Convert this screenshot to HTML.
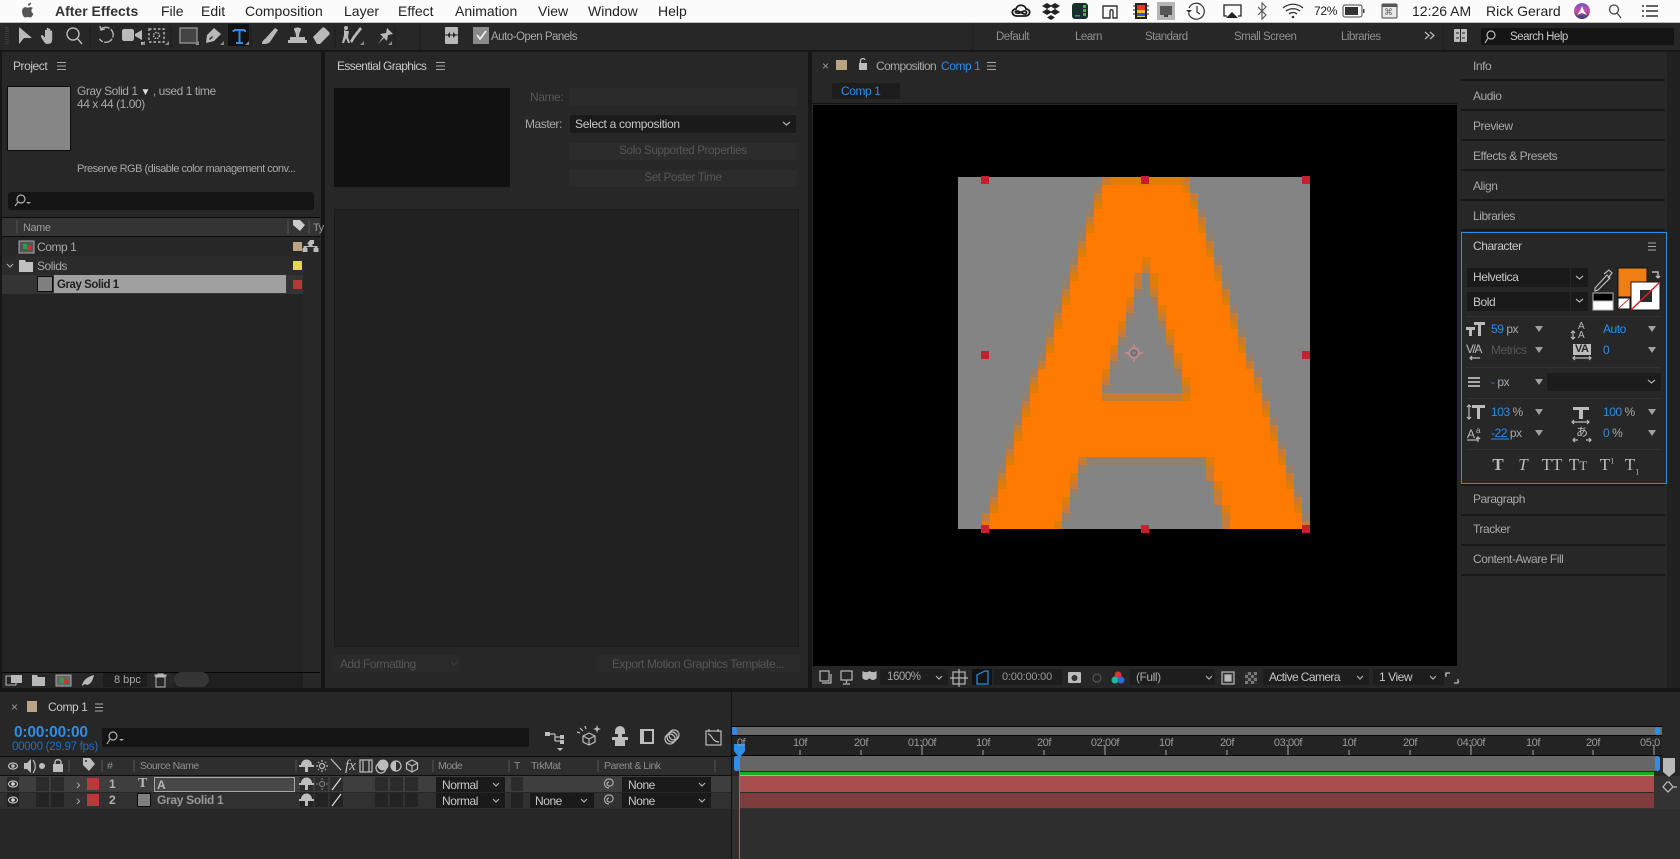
<!DOCTYPE html>
<html><head><meta charset="utf-8"><title>After Effects</title>
<style>
html,body{margin:0;padding:0;background:#161616;width:1680px;height:859px;overflow:hidden}
#r{position:relative;width:1680px;height:859px;overflow:hidden;font-family:"Liberation Sans",sans-serif}
#r div{position:absolute}
.t{position:absolute;white-space:nowrap;font:12px/14px "Liberation Sans",sans-serif;letter-spacing:-.45px;color:#a8a8a8}
.m{position:absolute;white-space:nowrap;font:14px/18px "Liberation Sans",sans-serif;color:#222;top:2px}
.b{color:#2e8de6}
.d{color:#565656}
.w{color:#c8c8c8}
.c{transform:translateX(-50%)}
.h{font-size:10.5px;color:#8f8f8f;letter-spacing:-.5px;top:759px}
.g{font-size:11.5px;letter-spacing:-.5px;top:30px}
.k{font-size:11px;color:#9a9a9a;top:736px;letter-spacing:-.4px}
.s{font-family:"Liberation Serif",serif;font-size:17px;line-height:18px;color:#bcbcbc;letter-spacing:0;top:456px;transform:translateX(-50%)}
svg{position:absolute;left:0;top:0}
</style></head><body><div id="r">

<!-- menu bar -->
<div style="left:0;top:0;width:1680px;height:22px;background:#fbfbfb"></div>
<div style="left:0;top:22px;width:1680px;height:1px;background:#bdbdbd"></div>
<div style="left:0;top:23px;width:1680px;height:27px;background:#272727"></div>
<div style="left:228px;top:24px;width:21px;height:22px;background:#111"></div>
<div style="left:1481px;top:28px;width:193px;height:17px;background:#141414;border-radius:2px"></div>

<!-- panels -->
<div style="left:2px;top:52px;width:319px;height:636px;background:#272727"></div>
<div style="left:325px;top:52px;width:483px;height:636px;background:#272727"></div>
<div style="left:812px;top:52px;width:649px;height:636px;background:#272727"></div>
<div style="left:1461px;top:52px;width:206px;height:636px;background:#272727"></div>
<div style="left:1667px;top:52px;width:13px;height:636px;background:#202020"></div>
<div style="left:0;top:692px;width:1680px;height:167px;background:#272727"></div>

<!-- project -->
<div style="left:7px;top:86px;width:64px;height:65px;background:#868686;border:1px solid #0b0b0b;box-sizing:border-box"></div>
<div style="left:8px;top:192px;width:306px;height:18px;background:#141414;border-radius:3px"></div>
<div style="left:2px;top:217px;width:318px;height:1px;background:#0a0a0a"></div>
<div style="left:2px;top:218px;width:318px;height:19px;background:#343434"></div>
<div style="left:2px;top:236px;width:318px;height:1px;background:#0a0a0a"></div>
<div style="left:2px;top:237px;width:301px;height:19px;background:#272727"></div>
<div style="left:2px;top:256px;width:301px;height:19px;background:#2b2b2b"></div>
<div style="left:2px;top:275px;width:301px;height:19px;background:#343434"></div>
<div style="left:54px;top:275px;width:232px;height:18px;background:#a0a0a0"></div>
<div style="left:37px;top:276px;width:16px;height:16px;background:#7f7f7f;border:1px solid #0c0c0c;box-sizing:border-box"></div>
<div style="left:293px;top:242px;width:9px;height:9px;background:#b9a583"></div>
<div style="left:293px;top:261px;width:9px;height:9px;background:#e6d844"></div>
<div style="left:293px;top:280px;width:9px;height:9px;background:#b83636"></div>
<div style="left:2px;top:294px;width:301px;height:378px;background:#242424"></div>
<div style="left:2px;top:672px;width:318px;height:1px;background:#050505"></div>
<div style="left:174px;top:673px;width:129px;height:15px;background:#1f1f1f"></div>
<div style="left:103px;top:673px;width:44px;height:14px;background:#1d1d1d;border-radius:2px"></div>
<div style="left:174px;top:672px;width:35px;height:15px;background:#353535;border-radius:8px"></div>

<!-- essential graphics -->
<div style="left:334px;top:88px;width:176px;height:99px;background:#111"></div>
<div style="left:569px;top:88px;width:228px;height:18px;background:#2b2b2b"></div>
<div style="left:570px;top:115px;width:226px;height:18px;background:#1a1a1a;border-radius:2px"></div>
<div style="left:569px;top:143px;width:228px;height:17px;background:#2c2c2c"></div>
<div style="left:569px;top:170px;width:228px;height:17px;background:#2c2c2c"></div>
<div style="left:334px;top:209px;width:465px;height:438px;background:#212121;border:1px solid #1a1a1a;box-sizing:border-box"></div>
<div style="left:333px;top:655px;width:127px;height:17px;background:#2a2a2a"></div>
<div style="left:597px;top:655px;width:203px;height:17px;background:#2a2a2a"></div>

<!-- comp panel -->
<div style="left:832px;top:83px;width:68px;height:16px;background:#1d1d1d;border-radius:2px"></div>
<div style="left:812px;top:103px;width:645px;height:1px;background:#111"></div>
<div style="left:813px;top:105px;width:644px;height:561px;background:#000"></div>
<div style="left:812px;top:666px;width:649px;height:22px;background:#262626"></div>
<div style="left:880px;top:669px;width:68px;height:16px;background:#1d1d1d;border-radius:2px"></div>
<div style="left:972px;top:669px;width:20px;height:16px;background:#121212"></div>
<div style="left:994px;top:669px;width:68px;height:16px;background:#1d1d1d;border-radius:2px"></div>
<div style="left:1130px;top:669px;width:85px;height:16px;background:#1d1d1d;border-radius:2px"></div>
<div style="left:1263px;top:669px;width:106px;height:16px;background:#1d1d1d;border-radius:2px"></div>
<div style="left:1373px;top:669px;width:71px;height:16px;background:#1d1d1d;border-radius:2px"></div>

<!-- A pixel art -->
<svg style="left:958px;top:177px" width="352" height="352" viewBox="0 0 44 44" shape-rendering="crispEdges" fill="none">
<rect width="44" height="44" fill="#848484"/>
<path stroke="#ff7a00" stroke-width="1" d="M18 1.5H28M18 2.5H29M18 3.5H29M17 4.5H30M17 5.5H30M17 6.5H30M16 7.5H31M16 8.5H31M16 9.5H31M15 10.5H32M15 11.5H32M15 12.5H32M14 13.5H33M14 14.5H33M14 15.5H33M13 16.5H34M13 17.5H34M13 18.5H34M12 19.5H35M12 20.5H35M12 21.5H35M11 22.5H36M11 23.5H36M10 24.5H37M10 25.5H37M10 26.5H37M9 27.5H38M9 28.5H38M9 29.5H38M8 30.5H39M8 31.5H39M8 32.5H39M7 33.5H40M7 34.5H40M7 35.5H40M6 36.5H41M6 37.5H41M6 38.5H41M5 39.5H42M5 40.5H42M5 41.5H42M4 42.5H43M4 43.5H43"/>
<path stroke="#848484" stroke-width="1" d="M23 12.5H24M23 13.5H24M23 14.5H24M22 15.5H24M22 16.5H25M22 17.5H25M21 18.5H25M21 19.5H26M21 20.5H26M20 21.5H26M20 22.5H27M20 23.5H27M19 24.5H27M19 25.5H28M19 26.5H28M16 36.5H31M15 37.5H31M15 38.5H32M15 39.5H32M14 40.5H32M14 41.5H33M14 42.5H33M13 43.5H33"/>
<path stroke="#e07c08" stroke-width="1" d="M19 0.5H28M28 1.5h1M17 3.5h1M16 6.5h1M15 9.5h1M14 12.5h1M13 15.5h1M12 18.5h1M11 21.5h1M9 26.5h1M8 29.5h1M7 32.5h1M6 35.5h1M5 38.5h1M4 41.5h1M3 43.5h1M29 3.5h1M30 6.5h1M31 9.5h1M32 12.5h1M33 15.5h1M34 18.5h1M35 21.5h1M37 26.5h1M38 29.5h1M39 32.5h1M40 35.5h1M41 38.5h1M42 41.5h1M23 10.5h1M24 12.5h1M24 13.5h1M21 15.5h1M25 16.5h1M20 18.5h1M26 19.5h1M19 21.5h1M27 22.5h1M18 24.5h1M28 25.5h1M28 27.5h1M31 35.5h1M14 37.5h1M32 38.5h1M13 40.5h1M33 41.5h1M12 43.5h1"/>
<path stroke="#c67c34" stroke-width="1" d="M18 0.5h1M28 0.5h1M17 2.5h1M16 5.5h1M15 8.5h1M14 11.5h1M13 14.5h1M12 17.5h1M11 20.5h1M10 23.5h1M9 25.5h1M8 28.5h1M7 31.5h1M6 34.5h1M5 37.5h1M4 40.5h1M3 42.5h1M29 2.5h1M30 5.5h1M31 8.5h1M32 11.5h1M33 14.5h1M34 17.5h1M35 20.5h1M36 23.5h1M37 25.5h1M38 28.5h1M39 31.5h1M40 34.5h1M41 37.5h1M42 40.5h1M43 43.5h1M23 11.5h1M22 12.5h1M22 13.5h1M24 14.5h1M21 16.5h1M25 17.5h1M20 19.5h1M26 20.5h1M19 22.5h1M27 23.5h1M18 25.5h1M28 26.5h1M18 27.5H28M15 35.5h1M31 36.5h1M31 37.5h1M14 38.5h1M32 39.5h1M32 40.5h1M13 41.5h1M33 42.5h1M33 43.5h1"/>
<path stroke="#95806c" stroke-width="1" d="M17 1.5h1M16 4.5h1M15 7.5h1M14 10.5h1M13 13.5h1M12 16.5h1M11 19.5h1M10 22.5h1M9 24.5h1M8 27.5h1M7 30.5h1M6 33.5h1M5 36.5h1M4 39.5h1M30 4.5h1M31 7.5h1M32 10.5h1M33 13.5h1M34 16.5h1M35 19.5h1M36 22.5h1M37 24.5h1M38 27.5h1M39 30.5h1M40 33.5h1M41 36.5h1M42 39.5h1M43 42.5h1M22 14.5h1M24 15.5h1M21 17.5h1M25 18.5h1M20 20.5h1M26 21.5h1M19 23.5h1M27 24.5h1M18 26.5h1M16 35.5H31M15 36.5h1M14 39.5h1M13 42.5h1"/>
</svg>

<!-- character dropdowns -->
<div style="left:1467px;top:268px;width:103px;height:19px;background:#1a1a1a"></div>
<div style="left:1571px;top:268px;width:17px;height:19px;background:#1a1a1a"></div>
<div style="left:1467px;top:292px;width:103px;height:19px;background:#1a1a1a"></div>
<div style="left:1571px;top:292px;width:17px;height:19px;background:#1a1a1a"></div>
<div style="left:1547px;top:373px;width:114px;height:18px;background:#1c1c1c;border-radius:2px"></div>
<div style="left:1466px;top:316px;width:195px;height:1px;background:#333"></div>
<div style="left:1466px;top:367px;width:195px;height:1px;background:#333"></div>
<div style="left:1466px;top:398px;width:195px;height:1px;background:#333"></div>
<div style="left:1466px;top:449px;width:195px;height:1px;background:#333"></div>
<div style="left:1461px;top:232px;width:206px;height:252px;border:1px solid #2e8de6;box-sizing:border-box"></div>
<div style="left:1461px;top:79px;width:204px;height:2px;background:#181818"></div>
<div style="left:1461px;top:109px;width:204px;height:2px;background:#181818"></div>
<div style="left:1461px;top:139px;width:204px;height:2px;background:#181818"></div>
<div style="left:1461px;top:169px;width:204px;height:2px;background:#181818"></div>
<div style="left:1461px;top:199px;width:204px;height:2px;background:#181818"></div>
<div style="left:1461px;top:229px;width:204px;height:2px;background:#181818"></div>
<div style="left:1461px;top:484px;width:204px;height:2px;background:#181818"></div>
<div style="left:1461px;top:514px;width:204px;height:2px;background:#181818"></div>
<div style="left:1461px;top:544px;width:204px;height:2px;background:#181818"></div>
<div style="left:1461px;top:574px;width:204px;height:2px;background:#181818"></div>

<!-- timeline layout -->
<div style="left:102px;top:728px;width:427px;height:19px;background:#141414;border-radius:2px"></div>
<div style="left:0;top:756px;width:732px;height:1px;background:#0a0a0a"></div>
<div style="left:0;top:757px;width:732px;height:18px;background:#2e2e2e"></div>
<div style="left:0;top:775px;width:732px;height:1px;background:#0e0e0e"></div>
<div style="left:0;top:776px;width:732px;height:16px;background:#3e3e3e"></div>
<div style="left:0;top:793px;width:732px;height:16px;background:#313131"></div>
<div style="left:732px;top:809px;width:948px;height:50px;background:#2e2e2e"></div>
<div style="left:732px;top:726px;width:930px;height:1px;background:#050505"></div>
<div style="left:732px;top:727px;width:930px;height:8px;background:#6a6a6a"></div>
<div style="left:732px;top:735px;width:930px;height:1px;background:#050505"></div>
<div style="left:732px;top:736px;width:930px;height:19px;background:#232323"></div>
<div style="left:732px;top:755px;width:930px;height:1px;background:#050505"></div>
<div style="left:735px;top:756px;width:923px;height:15px;background:#666"></div>
<div style="left:732px;top:776px;width:948px;height:33px;background:#333"></div>
<div style="left:732px;top:727px;width:5px;height:8px;background:#2e8de6;border-radius:3px"></div>
<div style="left:1655px;top:727px;width:5px;height:8px;background:#2e8de6;border-radius:3px"></div>
<div style="left:734px;top:756px;width:5px;height:15px;background:#2e8de6;border-radius:3px"></div>
<div style="left:1655px;top:756px;width:5px;height:15px;background:#2e8de6;border-radius:3px"></div>
<div style="left:740px;top:772px;width:914px;height:3px;background:#12b020"></div>
<div style="left:740px;top:775px;width:914px;height:1px;background:#cfa0a0"></div>
<div style="left:740px;top:776px;width:914px;height:16px;background:#a94e4d"></div>
<div style="left:740px;top:792px;width:914px;height:1px;background:#2a2a2a"></div>
<div style="left:740px;top:793px;width:914px;height:15px;background:#7e3d3c"></div>
<div style="left:731px;top:692px;width:1px;height:167px;background:#111"></div>
<div style="left:739px;top:747px;width:1px;height:112px;background:#2e8de6"></div>
<div style="left:27px;top:701px;width:10px;height:11px;background:#b9a583"></div>
<div style="left:836px;top:60px;width:11px;height:10px;background:#b9a583"></div>
<div style="left:7px;top:777px;width:12px;height:14px;background:#2a2a2a"></div>
<div style="left:7px;top:793px;width:12px;height:14px;background:#222"></div>
<div style="left:36px;top:777px;width:13px;height:14px;background:#2c2c2c"></div><div style="left:51px;top:777px;width:13px;height:14px;background:#2c2c2c"></div>
<div style="left:36px;top:793px;width:13px;height:14px;background:#232323"></div><div style="left:51px;top:793px;width:13px;height:14px;background:#232323"></div>
<div style="left:87px;top:778px;width:12px;height:12px;background:#b83a3a"></div>
<div style="left:87px;top:794px;width:12px;height:12px;background:#b83a3a"></div>
<div style="left:137px;top:793px;width:14px;height:14px;background:#7f7f7f;border:1px solid #0c0c0c;box-sizing:border-box"></div>
<div style="left:154px;top:777px;width:141px;height:15px;background:#484848;border:1px solid #a8a8a8;box-sizing:border-box"></div>
<div style="left:300px;top:777px;width:13px;height:14px;background:#2c2c2c"></div><div style="left:315px;top:777px;width:13px;height:14px;background:#2c2c2c"></div><div style="left:330px;top:777px;width:13px;height:14px;background:#2c2c2c"></div>
<div style="left:300px;top:793px;width:13px;height:14px;background:#232323"></div><div style="left:315px;top:793px;width:13px;height:14px;background:#232323"></div><div style="left:330px;top:793px;width:13px;height:14px;background:#232323"></div>
<div style="left:375px;top:777px;width:13px;height:14px;background:#2c2c2c"></div><div style="left:390px;top:777px;width:13px;height:14px;background:#2c2c2c"></div><div style="left:405px;top:777px;width:13px;height:14px;background:#2c2c2c"></div>
<div style="left:375px;top:793px;width:13px;height:14px;background:#232323"></div><div style="left:390px;top:793px;width:13px;height:14px;background:#232323"></div><div style="left:405px;top:793px;width:13px;height:14px;background:#232323"></div>
<div style="left:436px;top:777px;width:69px;height:15px;background:#1a1a1a"></div>
<div style="left:436px;top:793px;width:69px;height:15px;background:#1a1a1a"></div>
<div style="left:511px;top:777px;width:12px;height:14px;background:#2c2c2c"></div>
<div style="left:511px;top:793px;width:12px;height:15px;background:#232323"></div>
<div style="left:530px;top:793px;width:64px;height:15px;background:#1a1a1a"></div>
<div style="left:622px;top:777px;width:89px;height:15px;background:#1a1a1a"></div>
<div style="left:622px;top:793px;width:89px;height:15px;background:#1a1a1a"></div>

<!-- overlay icons -->
<svg width="1680" height="859" viewBox="0 0 1680 859">
<g fill="#c81f30" stroke="#3a1a1a" stroke-width="0">
<rect x="981" y="176" width="8" height="8"/><rect x="1141" y="176" width="8" height="8"/><rect x="1302" y="176" width="8" height="8"/>
<rect x="981" y="351" width="8" height="8"/><rect x="1302" y="351" width="8" height="8"/>
<rect x="981" y="525" width="8" height="8"/><rect x="1141" y="525" width="8" height="8"/><rect x="1302" y="525" width="8" height="8"/>
</g>
<g fill="none" stroke="#d88a90" stroke-width="1.200"><circle cx="1134" cy="353" r="5"/><path d="M1134 344v4M1134 358v4M1125 353h4M1139 353h4"/></g>
<circle cx="1134" cy="353" r="2.500" fill="none" stroke="#666"/>

<!-- menu bar icons -->
<path fill="#555" d="M28 4.600c.7-1.200 1.900-2 3-2.100.2 1.500-1 3.300-3 3.200zM33 8c-1 .7-1.600 1.500-1.600 2.700 0 1.400.8 2.400 2 2.900-.6 1.700-1.800 3.900-3.200 3.900-.8 0-1.400-.5-2.400-.5s-1.700.5-2.400.5c-1.700 0-3.400-3.300-3.400-6 0-2.900 1.900-4.400 3.500-4.400 1 0 1.800.6 2.400.6.5 0 1.500-.6 2.600-.6 1 0 1.800.4 2.500 1z"/>
<g fill="none" stroke="#1a1a1a" stroke-width="1.800"><path d="M1017 16c-6 0-6-7-1-7 1-5 9-5 10 0 5 0 5 7-1 7z"/><path d="M1017 13c-2 0-2-2 0-2 3 0 5 3 8 3 2 0 2-3 0-3-3 0-5 3-8 2"/></g>
<path fill="#222" d="M1047 3l5 3-5 3-5-3zM1055 3l5 3-5 3-5-3zM1047 9l5 3-5 3-5-3zM1055 9l5 3-5 3-5-3zM1051 15l4 2.500-4 2.500-4-2.500z"/>
<rect x="1072" y="3" width="16" height="16" rx="3" fill="#17302c"/><rect x="1083" y="5" width="3" height="3" fill="#3ab54a"/><rect x="1083" y="9" width="3" height="3" fill="#3ab54a"/><rect x="1083" y="13" width="3" height="3" fill="#3ab54a"/><rect x="1075" y="15" width="5" height="1.500" fill="#3a7ae0"/>
<path fill="none" stroke="#333" stroke-width="1.400" d="M1103 18V6h14v12h-4v-6c0-3-3-3-3 0v6z"/>
<rect x="1135" y="3" width="12" height="16" fill="#222"/><rect x="1137" y="5" width="8" height="5" fill="#e33"/><rect x="1137" y="10" width="8" height="3" fill="#f8b620"/><rect x="1137" y="13" width="8" height="3" fill="#3a4be0"/><rect x="1137" y="16" width="8" height="1" fill="#dd4"/><path stroke="#222" d="M1133 6h2M1133 10h2M1133 14h2M1147 6h2M1147 10h2M1147 14h2"/>
<rect x="1157" y="2" width="18" height="18" fill="#b5b5b5"/><rect x="1160" y="6" width="12" height="9" fill="#555"/><rect x="1164" y="15" width="4" height="2" fill="#444"/>
<g fill="none" stroke="#333" stroke-width="1.200"><path d="M1189 8a8 8 0 1 1-.5 5"/><path d="M1197 6v6l3 2"/></g><path fill="#333" d="M1186 10h6l-3 3z"/>
<path fill="none" stroke="#222" stroke-width="1.300" d="M1227 16h-3V5h17v11h-3"/><path fill="#222" d="M1226 18h12l-6-6z"/>
<path fill="none" stroke="#555" stroke-width="1.100" d="M1258 7l8 8-4 4V3l4 4-8 8"/>
<path fill="none" stroke="#333" stroke-width="1.300" d="M1283 8c6-5 14-5 20 0M1286 11c4-3 10-3 14 0M1289 14c2-2 6-2 8 0"/><circle cx="1293" cy="17" r="1.300" fill="#333"/>
<rect x="1343" y="5" width="19" height="12" rx="2" fill="none" stroke="#444"/><rect x="1345" y="7" width="13" height="8" fill="#333"/><rect x="1363" y="9" width="1.500" height="4" fill="#444"/>
<rect x="1382" y="4" width="15" height="14" rx="1" fill="#e8e8e8" stroke="#444"/><rect x="1382" y="4" width="15" height="3" fill="#555"/>
<defs><linearGradient id="si" x1="0" y1="0" x2="0" y2="1"><stop offset="0" stop-color="#6a5acd"/><stop offset=".5" stop-color="#d14c9c"/><stop offset="1" stop-color="#2a3a7a"/></linearGradient></defs>
<circle cx="1582" cy="11" r="8" fill="url(#si)"/><path fill="#fff" d="M1582 6l2 5 3 4-5-2-5 2 3-4z"/>
<g fill="none" stroke="#444" stroke-width="1.300"><circle cx="1614" cy="9.500" r="4.500"/><path d="M1617 13l4 5"/></g>
<path stroke="#333" stroke-width="1.500" d="M1642 6h2m2 0h12M1642 11h2m2 0h12M1642 16h2m2 0h12"/>

<!-- toolbar -->
<path stroke="#3a3a3a" stroke-dasharray="1 1" stroke-width="4" d="M7 27v18"/>
<g fill="#b9b9b9">
<path d="M19 27v17l5-6h8z"/>
<path d="M46 44c-2-2-5-6-5-8 0-1 1-1.500 2-.5l2 2v-7c0-1 1.800-1 1.800 0v4-6c0-1 1.800-1 1.800 0v6-5c0-1 1.800-1 1.800 0v5-3c0-1 1.800-1 1.800 0v7c0 3-1 5-2 5z"/>
<path d="M122 31c0-1 1-2 2-2h8c1 0 2 1 2 2v8c0 1-1 2-2 2h-8c-1 0-2-1-2-2zM135 34l7-4v10l-7-4z"/>
<rect x="180" y="28" width="17" height="15" fill="#444" stroke="#8a8a8a" stroke-width="1.500"/>
<path d="M206 43l1-8 7-7 7 6-7 7zM210 40l3-3-1-1-3 3z"/>
<path d="M262 44c0-2 1-4 3-5l10-11 3 2-8 12c-2 2-5 2-8 2z"/>
<path d="M288 40h19v3h-19zM290 37h15v3h-15zM294 29c0-2 7-2 7 0 0 2-2 3-2 8h-3c0-5-2-6-2-8z"/>
<path d="M313 37l9-9c1-1 2-1 3 0l4 4c1 1 1 2 0 3l-9 9h-3z"/>
<path d="M378 44l5-7-3-3 6-1 1-5 6 6-5 1-1 6-3-3z"/>
<path d="M344 30l3 1 2 0-1 6 2 6h-2l-2-5-2 5h-2l2-8zM360 27l2 2-7 9-3 5-2-2 3-5z"/>
<circle cx="346" cy="28" r="2"/>
<path d="M141 42h3v3h-3zM172 0"/>
<path d="M145 45h-4l4-4zM169 45h-4l4-4zM199 45h-4l4-4zM224 45h-4l4-4zM249 45h-4l4-4zM364 45h-4l4-4zM392 45h-4l4-4z" fill="#8a8a8a"/>
<path d="M473 27h16v17h-16z" fill="#8a8a8a"/>
<rect x="445" y="27" width="13" height="17" rx="1"/>
</g>
<path d="M445 35h13" stroke="#272727" stroke-width="1"/><path fill="#272727" d="M450 32v6l-3-3zM453 32v6l3-3z"/><path d="M477 35l3 4 6-8" stroke="#eee" stroke-width="1.800" fill="none"/>
<g fill="none" stroke="#b9b9b9" stroke-width="1.400">
<circle cx="73" cy="34" r="6"/><path d="M77 38l5 6"/>
<path d="M101 29a7.500 7.500 0 1 1-1.500 10" stroke-dasharray="9 1.500"/><path d="M100 26l1 4 4-1"/>
<rect x="149" y="29" width="15" height="13" stroke-dasharray="2.500 2"/><circle cx="156.500" cy="35.500" r="3" stroke-dasharray="1.500 1"/>
</g>
<path d="M234 30h11M239.500 30v13M236 43h7M233.500 30v2M245 30v2" stroke="#2e8de6" stroke-width="2" fill="none"/>
<rect x="1454" y="29" width="13" height="13" rx="1" fill="#bbb"/><path d="M1460.500 29v13M1456 33h3M1456 38h3M1462 33h3M1462 38h3" stroke="#222"/>
<g fill="none" stroke="#bbb" stroke-width="1.200"><circle cx="1491" cy="35" r="4"/><path d="M1488 38l-3 5"/><path d="M1425 32l4 3.500-4 3.500M1430 32l4 3.500-4 3.500"/></g>
<path stroke="#1b1b1b" d="M973 23v27M1443 23v27M420 23v27M171 26v22M90 26v22M251 26v22M335 26v22M395 26v22"/>

<!-- hamburgers -->
<g stroke="#a8a8a8" stroke-width="1">
<path d="M57 62.500h9M57 66h9M57 69.500h9"/>
<path d="M436 62.500h9M436 66h9M436 69.500h9"/>
<path d="M987 62.500h9M987 66h9M987 69.500h9"/>
<path d="M1648 243h8M1648 246.500h8M1648 250h8"/>
<path d="M95 704h8M95 707.500h8M95 711h8"/>
</g>
<!-- project search, icons -->
<g fill="none" stroke="#b0b0b0" stroke-width="1.200"><circle cx="21" cy="199" r="4"/><path d="M18 202l-3 4"/></g><path fill="#b0b0b0" d="M26 202h5l-2.500 2z"/>
<g stroke="#555"><path d="M17 220v14M288 220v14M309 220v14"/></g>
<path fill="#ccc" d="M293 220h7l5 5-5 6-7-6z"/>
<rect x="19" y="241" width="15" height="12" fill="#555" stroke="#aaa"/><rect x="23" y="244" width="4" height="5" fill="#2e9e4a"/><rect x="27" y="245" width="4" height="5" fill="#c33"/>
<path fill="#bbb" d="M310 240h4v4h-1.500v2h5v2h1v4h-5v-4h1v-1h-8v1h1v4h-5v-4h1v-2h5v-2h-1.500z"/>
<path fill="#c0c0c0" d="M19 260h6l1 2h7v10H19z"/>
<path fill="none" stroke="#aaa" stroke-width="1.200" d="M7 264l3 3 3-3"/>
<g fill="#b8b8b8">
<rect x="6" y="676" width="10" height="9" fill="none" stroke="#b8b8b8"/><rect x="11" y="675" width="11" height="8"/>
<path d="M32 675h5l1 2h7v9H32z"/>
<rect x="56" y="675" width="15" height="11" fill="#666" stroke="#aaa"/>
<path d="M82 686c0-4 4-9 12-11-1 5-3 9-7 10l-2-1z"/>
<path d="M156 677h9v10h-9zM155 675h11v1h-11zM158 674h5v1h-5z" fill="none" stroke="#b8b8b8"/>
</g>
<rect x="60" y="678" width="4" height="5" fill="#2e9e4a"/><rect x="64" y="679" width="4" height="5" fill="#c33"/>
<!-- dropdown chevrons -->
<g fill="none" stroke="#b0b0b0" stroke-width="1.200">
<path d="M783 122l3.500 3 3.500-3M1576 276l3.500 3 3.500-3M1576 299l3.500 3 3.500-3M1648 380l3.500 3 3.500-3"/>
<path d="M493 783l3 3 3-3M493 799l3 3 3-3M581 799l3 3 3-3M699 783l3 3 3-3M699 799l3 3 3-3"/>
<path d="M936 676l3 3 3-3M1206 676l3 3 3-3M1357 676l3 3 3-3M1430 676l3 3 3-3"/>
</g>
<path fill="none" stroke="#3d3d3d" d="M451 662l3 3 3-3"/>
<!-- viewer toolbar icons -->
<g fill="none" stroke="#b8b8b8" stroke-width="1.200">
<rect x="820" y="671" width="9" height="10"/><path d="M831 674v9h-9"/>
<rect x="841" y="671" width="11" height="9"/><path d="M846.500 680v3M843 684h7"/>
<path d="M863 672c2 1 4 1 6 0v6c-2 2-4 2-6 0zM870 672c2 1 4 1 6 0v6c-2 2-4 2-6 0z" fill="#b8b8b8"/>
<rect x="953" y="672" width="12" height="12"/><path d="M959 669v18M950 678h18"/>
<path stroke="#2e8de6" d="M977 682v-7l8-4h3v13h-11z"/>
<circle cx="1097" cy="678" r="4" stroke="#555"/>
<rect x="1222" y="672" width="12" height="12" fill="#333"/><rect x="1225" y="675" width="6" height="6" fill="#bbb"/>
<path d="M1450 673h-4v4M1454 683h4v-4M1447 673l-2 2M1457 683l2-2"/>
</g>
<rect x="1068" y="672" width="13" height="11" rx="1" fill="#bbb"/><circle cx="1074.500" cy="678" r="3" fill="#333"/>
<rect x="1245" y="672" width="12" height="12" fill="#777"/><path d="M1245 672h3v3h-3zM1251 672h3v3h-3zM1248 675h3v3h-3zM1254 675h3v3h-3zM1245 678h3v3h-3zM1251 678h3v3h-3zM1248 681h3v3h-3zM1254 681h3v3h-3z" fill="#333"/>
<circle cx="1118" cy="675" r="3.500" fill="#d33"/><circle cx="1115" cy="680" r="3.500" fill="#2b9"/><circle cx="1121" cy="680" r="3.500" fill="#36d"/>

<!-- character icons -->
<g fill="none" stroke="#bcbcbc" stroke-width="1.200">
<path d="M1595 288l12-13 3 3-12 12-3 1z"/><path d="M1604 274l5-4 3 3-4 5"/>
<path d="M1468 378h12M1468 382h12M1468 386h12" stroke-width="1.800"/>
<path d="M1469 405v14M1467 407l2-2 2 2M1467 417l2 2 2-2"/>
<path d="M1572 422h17M1574 424l-2-2 2-2M1587 424l2-2-2-2"/>
<path d="M1573 358h18M1575 360l-2-2 2-2M1589 360l2-2-2-2"/>
<path d="M1573 331v8M1571 333l2-2 2 2M1571 337l2 2 2-2"/>
<path d="M1470 358h10M1472 356l-2 2 2 2" />
<path d="M1478 442v-5M1476 439l2-2 2 2"/>
<path d="M1467 440h11"/>
<path d="M1573 440h5M1586 440h5M1575 438l-2 2 2 2M1589 438l2 2-2 2"/>
</g>
<path fill="#bcbcbc" d="M1466 327h9v3h-3v6h-3v-6h-3zM1474 322h11v3h-4v11h-3v-11h-4zM1472 405h13v3h-5v11h-3v-11h-5zM1573 407h16v3h-6v9h-4v-9h-6z"/>
<g fill="#a0a0a0">
<path d="M1535 326h8l-4 6zM1648 326h8l-4 6zM1535 347h8l-4 6zM1648 347h8l-4 6zM1535 379h8l-4 6zM1535 409h8l-4 6zM1648 409h8l-4 6zM1535 430h8l-4 6zM1648 430h8l-4 6z"/>
</g>
<path d="M1618 268h29v29h-29z" fill="#ef7f14" stroke="#111"/>
<rect x="1631" y="282" width="29" height="28" fill="#fff" stroke="#111"/>
<rect x="1640" y="290" width="12" height="12" fill="#2a2a2a"/>
<path d="M1631 310l29-28" stroke="#d81f26" stroke-width="1.500"/>
<path d="M1652 272h6v6M1658 278l-2-2m2 2l2-2" fill="none" stroke="#bbb" stroke-width="1.400"/>
<rect x="1593" y="293" width="20" height="8" fill="#000" stroke="#bbb"/><rect x="1593" y="301" width="20" height="9" fill="#fff" stroke="#bbb"/>
<rect x="1618" y="298" width="12" height="11" fill="#fff" stroke="#111"/><path d="M1619 308l10-9" stroke="#d33"/>
<path d="M1491 439h18" stroke="#2e8de6"/>
<rect x="1573" y="344" width="18" height="11" fill="#bcbcbc"/>

<!-- timeline panel icons -->
<g fill="none" stroke="#b0b0b0" stroke-width="1.200"><circle cx="113" cy="736" r="4"/><path d="M110 739l-3 5"/></g><path fill="#b0b0b0" d="M119 739h5l-2.500 2z"/>
<g fill="none" stroke="#bdbdbd" stroke-width="1.200">
<path d="M549 734h6M555 734v7M555 737h5M555 741h5"/>
<path d="M589 733l6 3v6l-6 3-6-3v-6zM583 736l6 3 6-3M589 739v6"/><path d="M583 731l-3-3M586 729l-1-3M580 733l-3-1"/>
<rect x="706" y="731" width="15" height="14"/><path d="M708 734c4 0 4 8 11 8"/><path d="M709 729v3M718 729v3"/>
<circle cx="670" cy="739" r="5"/><circle cx="672" cy="737" r="5"/><circle cx="674" cy="735" r="5"/>
<ellipse cx="13" cy="766" rx="4.500" ry="3"/><ellipse cx="13" cy="784" rx="4.500" ry="3"/><ellipse cx="13" cy="800" rx="4.500" ry="3"/>
<path d="M33 760c3 4 3 9 0 13" />
<path d="M331 759l10 11"/>
<rect x="360" y="760" width="12" height="12"/><path d="M363 760v12M369 760v12"/>
<circle cx="396" cy="766" r="5"/><path d="M412 760l5.500 3v6l-5.500 3-5.500-3v-6zM406.500 763l5.500 3 5.500-3M412 766v6"/>
<circle cx="381" cy="768" r="5"/>
<circle cx="322" cy="766" r="2.500"/><path d="M322 760v2M322 770v2M316 766h2M326 766h2M318 762l1 1M325 769l1 1M326 762l-1 1M319 769l-1 1"/>
<path stroke="#777" d="M322 778v2M322 788v2M316 784h2M326 784h2"/><circle cx="322" cy="784" r="2.500" stroke="#777"/>
<path stroke="#ddd" d="M332 790l9-12M332 806l9-12"/>
</g>
<circle cx="13" cy="766" r="1.800" fill="#bdbdbd"/><circle cx="13" cy="784" r="1.800" fill="#ddd"/><circle cx="13" cy="800" r="1.800" fill="#ddd"/>
<path fill="#bdbdbd" d="M24 763h3l4-4v14l-4-4h-3z"/>
<circle cx="42" cy="766" r="3" fill="#bdbdbd"/>
<circle cx="383" cy="765" r="5.500" fill="#bdbdbd"/>
<rect x="53" y="764" width="10" height="8" fill="#bdbdbd"/><path d="M55 764v-2c0-3 6-3 6 0v2" fill="none" stroke="#bdbdbd" stroke-width="1.400"/>
<path fill="#bdbdbd" d="M83 758h7l5 6-6 7-6-6z"/><circle cx="86" cy="761" r="1" fill="#272727"/>
<path fill="#bdbdbd" d="M396 761a5 5 0 0 0 0 10z"/>
<path fill="#bdbdbd" d="M612 737h16v3h-16zM615 731a5 5 0 0 1 10 0v3h-10zM618 734h4v3h-4zM615 740h10v6h-10zM301 765a5.500 5.500 0 0 1 11 0h2v2h-15v-2zM305 767h3v5h-3zM301 783a5.500 5.500 0 0 1 11 0h2v2h-15v-2zM305 785h3v5h-3zM301 799a5.500 5.500 0 0 1 11 0h2v2h-15v-2zM305 801h3v5h-3z"/>
<rect x="640" y="729" width="14" height="15" fill="#bdbdbd"/><rect x="644" y="731" width="8" height="11" fill="#272727"/>
<path fill="#bdbdbd" d="M545 732h5v4h-5zM560 735h4v4h-4zM560 740h4v4h-4z"/>
<path fill="#bdbdbd" d="M557 748h6l-3 3z"/>
<path fill="#bdbdbd" d="M597 725l1 3 3 1-3 1-1 3-1-3-3-1 3-1z" />
<g fill="none" stroke="#aaa" stroke-width="1.200"><path d="M609 788c-6 0-6-9 0-9 6 0 5 8 0 7-3-1-2-4 0-4"/><path d="M609 804c-6 0-6-9 0-9 6 0 5 8 0 7-3-1-2-4 0-4"/></g>
<path stroke="#555" d="M69 760v12M102 760v12M134 760v12M296 760v12M433 760v12M509 760v12M598 760v12M715 760v12"/>
<path fill="#2e8de6" d="M734 744h11v7l-5.500 7-5.500-7z"/>
<path fill="#b8b8b8" d="M1663 758h12v14l-6 5-6-5z"/>
<path fill="none" stroke="#b8b8b8" stroke-width="1.300" d="M1667 782l-4 5 5 5 5-5-4-5zM1673 787h4"/>
<path stroke="#aaa" d="M800 750v5M861 750v5M922 745v10M983 750v5M1044 750v5M1105 745v10M1166 750v5M1227 750v5M1288 745v10M1349 750v5M1410 750v5M1471 745v10M1533 750v5M1593 750v5M1654 745v10" fill="none"/>
<path fill="#bcbcbc" d="M859 63h8v7h-8z"/><path fill="none" stroke="#bcbcbc" stroke-width="1.300" d="M860.500 63v-2c0-3 4-3 4.500-1"/>
</svg>

<!-- menu text -->
<span class="m" style="left:55px;font-weight:bold;color:#333">After Effects</span>
<span class="m" style="left:161px">File</span>
<span class="m" style="left:201px">Edit</span>
<span class="m" style="left:245px">Composition</span>
<span class="m" style="left:344px">Layer</span>
<span class="m" style="left:398px">Effect</span>
<span class="m" style="left:455px">Animation</span>
<span class="m" style="left:538px">View</span>
<span class="m" style="left:588px">Window</span>
<span class="m" style="left:658px">Help</span>
<span class="m" style="left:1314px;font-size:12px;letter-spacing:-.3px">72%</span>
<span class="m" style="left:1412px">12:26 AM</span>
<span class="m" style="left:1486px">Rick Gerard</span>
<span class="m" style="left:1384px;top:7px;font-size:9px;line-height:10px;color:#666;letter-spacing:0">⌘</span>

<!-- toolbar text -->
<span class="t g" style="left:491px">Auto-Open Panels</span>
<span class="t g" style="left:996px;color:#8f8f8f">Default</span>
<span class="t g" style="left:1075px;color:#8f8f8f">Learn</span>
<span class="t g" style="left:1145px;color:#8f8f8f">Standard</span>
<span class="t g" style="left:1234px;color:#8f8f8f">Small Screen</span>
<span class="t g" style="left:1341px;color:#8f8f8f">Libraries</span>
<span class="t g w" style="left:1510px">Search Help</span>

<!-- project text -->
<span class="t w" style="left:13px;top:59px">Project</span>
<span class="t" style="left:77px;top:84px">Gray Solid 1 <span style="color:#ddd;font-size:10px">&#9660;</span> , used 1 time</span>
<span class="t" style="left:77px;top:97px">44 x 44 (1.00)</span>
<span class="t" style="left:77px;top:162px;letter-spacing:-.5px;font-size:11px">Preserve RGB (disable color management conv...</span>
<span class="t" style="left:23px;top:221px;font-size:11px;color:#999">Name</span>
<span class="t" style="left:313px;top:221px;font-size:11px;color:#999">Ty</span>
<span class="t" style="left:37px;top:240px">Comp 1</span>
<span class="t" style="left:37px;top:259px">Solids</span>
<span class="t" style="left:57px;top:278px;font-weight:bold;color:#1f1f1f;font-size:11.500px">Gray Solid 1</span>
<span class="t" style="left:114px;top:673px;font-size:11px;color:#a8a8a8;letter-spacing:0">8 bpc</span>

<!-- essential text -->
<span class="t w" style="left:337px;top:59px;letter-spacing:-.6px">Essential Graphics</span>
<span class="t d" style="left:530px;top:90px">Name:</span>
<span class="t" style="left:525px;top:117px">Master:</span>
<span class="t w" style="left:575px;top:117px;letter-spacing:-.3px">Select a composition</span>
<span class="t d c" style="left:683px;top:144px;font-size:11.500px;letter-spacing:-.3px">Solo Supported Properties</span>
<span class="t d c" style="left:683px;top:171px;font-size:11.500px;letter-spacing:-.3px">Set Poster Time</span>
<span class="t d" style="left:340px;top:657px">Add Formatting</span>
<span class="t d" style="left:612px;top:657px">Export Motion Graphics Template...</span>

<!-- comp text -->
<span class="t" style="left:822px;top:59px;color:#999">&times;</span>
<span class="t" style="left:876px;top:59px;letter-spacing:-.6px">Composition</span>
<span class="t b" style="left:941px;top:59px">Comp 1</span>
<span class="t b" style="left:841px;top:84px">Comp 1</span>
<span class="t" style="left:887px;top:670px;font-size:11.500px">1600%</span>
<span class="t" style="left:1002px;top:670px;font-size:11px;letter-spacing:-.2px;color:#9a9a9a">0:00:00:00</span>
<span class="t" style="left:1136px;top:670px">(Full)</span>
<span class="t w" style="left:1269px;top:670px;letter-spacing:-.6px">Active Camera</span>
<span class="t w" style="left:1379px;top:670px">1 View</span>

<!-- right panel text -->
<span class="t" style="left:1473px;top:59px">Info</span>
<span class="t" style="left:1473px;top:89px">Audio</span>
<span class="t" style="left:1473px;top:119px">Preview</span>
<span class="t" style="left:1473px;top:149px">Effects &amp; Presets</span>
<span class="t" style="left:1473px;top:179px">Align</span>
<span class="t" style="left:1473px;top:209px">Libraries</span>
<span class="t w" style="left:1473px;top:239px">Character</span>
<span class="t" style="left:1473px;top:492px">Paragraph</span>
<span class="t" style="left:1473px;top:522px">Tracker</span>
<span class="t" style="left:1473px;top:552px">Content-Aware Fill</span>
<span class="t w" style="left:1473px;top:270px">Helvetica</span>
<span class="t w" style="left:1473px;top:295px">Bold</span>
<span class="t" style="left:1491px;top:322px"><span class="b">59</span> px</span>
<span class="t b" style="left:1603px;top:322px">Auto</span>
<span class="t d" style="left:1491px;top:343px">Metrics</span>
<span class="t b" style="left:1603px;top:343px">0</span>
<span class="t" style="left:1491px;top:375px"><span class="b">-</span> px</span>
<span class="t" style="left:1491px;top:405px"><span class="b">103</span> %</span>
<span class="t" style="left:1603px;top:405px"><span class="b">100</span> %</span>
<span class="t" style="left:1491px;top:426px"><span class="b">-22</span> px</span>
<span class="t" style="left:1603px;top:426px"><span class="b">0</span> %</span>
<span class="t" style="left:1466px;top:342px;font-size:12px;color:#bcbcbc;letter-spacing:-1.500px">V/A</span>
<span class="t" style="left:1575px;top:343px;font-size:11px;line-height:12px;font-weight:bold;color:#272727;letter-spacing:-.5px">VA</span>
<span class="t" style="left:1578px;top:322px;font-size:10px;line-height:10px;color:#bcbcbc;letter-spacing:0">A</span>
<span class="t" style="left:1578px;top:331px;font-size:10px;line-height:10px;color:#bcbcbc;letter-spacing:0">A</span>
<span class="t" style="left:1467px;top:427px;font-size:12px;color:#bcbcbc;letter-spacing:0">A</span>
<span class="t" style="left:1476px;top:426px;font-size:8px;line-height:10px;color:#bcbcbc;letter-spacing:0">a</span>
<span class="t" style="left:1576px;top:425px;font:12px/14px 'Noto Sans CJK JP',sans-serif;color:#bcbcbc;letter-spacing:0">あ</span>
<span class="t s" style="left:1498px;font-weight:bold">T</span>
<span class="t s" style="left:1523px;font-style:italic">T</span>
<span class="t s" style="left:1552px">TT</span>
<span class="t s" style="left:1578px">T<span style="font-size:13px">T</span></span>
<span class="t s" style="left:1607px">T<sup style="font-size:8px;line-height:0">1</sup></span>
<span class="t s" style="left:1632px">T<sub style="font-size:8px;line-height:0">1</sub></span>

<!-- timeline text -->
<span class="t" style="left:11px;top:700px;color:#999">&times;</span>
<span class="t w" style="left:48px;top:700px">Comp 1</span>
<span class="t b" style="left:14px;top:724px;font-size:15.500px;line-height:18px;font-weight:bold;letter-spacing:-.2px">0:00:00:00</span>
<span class="t" style="left:12px;top:740px;color:#1f70c0;font-size:11.500px;letter-spacing:-.25px">00000 (29.97 fps)</span>
<span class="t h" style="left:107px">#</span>
<span class="t h" style="left:140px">Source Name</span>
<span class="t h" style="left:438px">Mode</span>
<span class="t h" style="left:514px">T</span>
<span class="t h" style="left:531px">TrkMat</span>
<span class="t h" style="left:604px">Parent &amp; Link</span>
<span class="t" style="left:345px;top:757px;font:italic 15px/18px 'Liberation Serif',serif;color:#bdbdbd;letter-spacing:0">fx</span>
<span class="t" style="left:76px;top:777px;color:#aaa;font-size:14px">&#8250;</span>
<span class="t" style="left:76px;top:793px;color:#aaa;font-size:14px">&#8250;</span>
<span class="t" style="left:109px;top:777px;font-weight:bold;color:#b0b0b0">1</span>
<span class="t" style="left:109px;top:793px;font-weight:bold;color:#b0b0b0">2</span>
<span class="t" style="left:138px;top:776px;font:bold 14px/16px 'Liberation Serif',serif;color:#b8b8b8">T</span>
<span class="t" style="left:157px;top:778px;font-weight:bold;color:#b8b8b8">A</span>
<span class="t" style="left:157px;top:793px;font-weight:bold;color:#999;letter-spacing:-.3px">Gray Solid 1</span>
<span class="t w" style="left:442px;top:778px">Normal</span>
<span class="t w" style="left:442px;top:794px">Normal</span>
<span class="t w" style="left:535px;top:794px">None</span>
<span class="t w" style="left:628px;top:778px">None</span>
<span class="t w" style="left:628px;top:794px">None</span>
<span class="t k c" style="left:741px">0f</span>
<span class="t k c" style="left:800px">10f</span>
<span class="t k c" style="left:861px">20f</span>
<span class="t k c" style="left:922px">01:00f</span>
<span class="t k c" style="left:983px">10f</span>
<span class="t k c" style="left:1044px">20f</span>
<span class="t k c" style="left:1105px">02:00f</span>
<span class="t k c" style="left:1166px">10f</span>
<span class="t k c" style="left:1227px">20f</span>
<span class="t k c" style="left:1288px">03:00f</span>
<span class="t k c" style="left:1349px">10f</span>
<span class="t k c" style="left:1410px">20f</span>
<span class="t k c" style="left:1471px">04:00f</span>
<span class="t k c" style="left:1533px">10f</span>
<span class="t k c" style="left:1593px">20f</span>
<span class="t k" style="left:1640px;width:20px;overflow:hidden">05:00f</span>
</div></body></html>
